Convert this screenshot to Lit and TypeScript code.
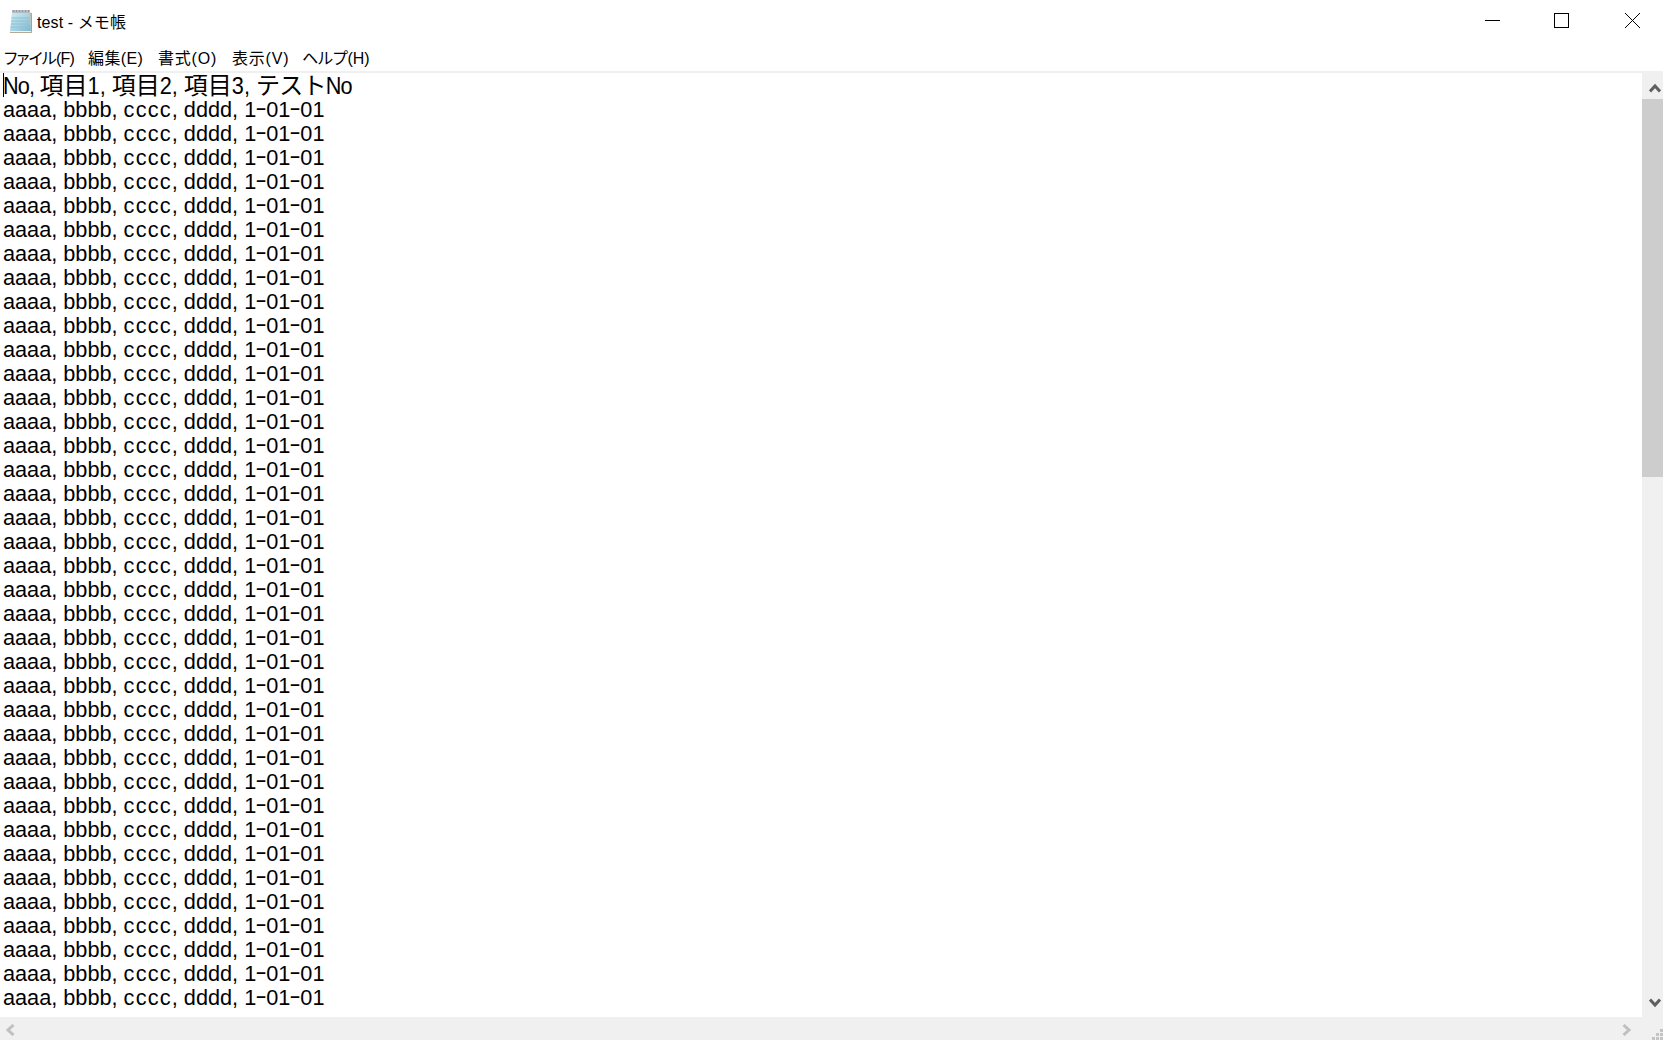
import { LitElement, html, css } from "lit";
import { customElement } from "lit/decorators.js";

const row = html`aaaa, bbbb, <span class="c">cccc</span>, dddd, 1<span class="dash">-</span>01<span class="dash">-</span>01`;

@customElement("app-root")
class AppRoot extends LitElement {
  static styles = css`
    :host { display: block; width: 1663px; height: 1040px; background: #fff; overflow: hidden; color: #000; font-family: "Liberation Sans", "Noto Sans CJK JP", sans-serif; }
    .win { display: flex; flex-direction: column; height: 1040px; }
    .title { height: 42px; display: flex; align-items: center; padding: 0 22px 0 9px; font-size: 16px; letter-spacing: 0.1px; flex: none; }
    .appicon { margin-right: 5px; flex: none; }
    .spacer { flex: 1; }
    .title svg.ctl { flex: none; display: block; }
    .title svg.mx { margin-left: 53px; }
    .title svg.cl { margin-left: 55px; }
    .menu { height: 29px; flex: none; display: flex; padding-left: 4px; font-size: 16px; align-items: center; border-bottom: 2px solid #f0f0f0; font-feature-settings: "palt"; }
    .menu span { flex: none; }
    .m1 { width: 84px; letter-spacing: -0.85px; }
    .m2 { width: 70px; letter-spacing: 0.4px; }
    .m3 { width: 74px; letter-spacing: 0.8px; }
    .m4 { width: 70px; letter-spacing: 0.8px; }
    .m5 { letter-spacing: -0.1px; }
    .mid { flex: 1; display: flex; min-height: 0; }
    .text { flex: 1; overflow: hidden; padding: 1px 0 0 3px; font-size: 21.7px; line-height: 24px; position: relative; }
    .line { display: block; height: 24px; white-space: pre; }
    .tall { display: inline-block; transform: scaleY(1.12); transform-origin: 0 81%; }
    .lead { letter-spacing: -0.8px; }
    .tail { letter-spacing: -1px; }
    .cjk, .kana { display: inline-block; height: 24px; font-size: 24px; }
    .kana { letter-spacing: -0.7px; }
    .c { letter-spacing: 1.2px; }
    .dash { display: inline-block; width: 10px; text-align: center; transform: translateY(-2.5px) scaleX(1.6); }
    .caret { position: absolute; left: 3px; top: 0; width: 1px; height: 24px; background: #000; }
    .vs { width: 21px; background: #f0f0f0; display: flex; flex-direction: column; flex: none; }
    .btn { height: 26px; display: flex; align-items: center; justify-content: center; flex: none; padding-left: 4px; }
    .up { padding-top: 3px; box-sizing: border-box; }
    .down { padding-bottom: 2px; box-sizing: border-box; }
    .thumb { height: 378px; background: #cdcdcd; flex: none; }
    .fill { flex: 1; }
    .hs { height: 23px; box-sizing: border-box; padding-top: 2px; background: #f0f0f0; flex: none; display: flex; align-items: center; position: relative; }
    .hs svg.l { margin-left: 5px; }
    .hs svg.r { margin-right: 31px; }
    .grip { position: absolute; right: 0; bottom: 0; }
  `;
  render() {
    const rows = Array.from({ length: 38 }, () => row);
    return html`<div class="win">
      <div class="title">
        <svg class="appicon" width="23" height="23" viewBox="0 0 23 23">
          <defs><linearGradient id="pg" x1="0" y1="0" x2="1" y2="1"><stop offset="0" stop-color="#d4edf5"/><stop offset="0.55" stop-color="#a5d3e3"/><stop offset="1" stop-color="#7fb6cc"/></linearGradient></defs>
          <path d="M3 2h20v20H1z" fill="#f4f1e8"/>
          <path d="M3 2h18l1 19H1z" fill="url(#pg)"/>
          <path d="M2.500 8h18M2.200 11h18.600M2 14h19M1.700 17h19.500" stroke="#8fc0d2" stroke-width="1" fill="none"/>
          <path d="M3 0h18v3H3z" fill="#b4bcc0"/>
          <path d="M4 1h1M7 1h1M10 1h1M13 1h1M16 1h1M19 1h1" stroke="#6f7a80" stroke-width="1"/>
          <path d="M22 3l1 20" stroke="#a89f8c" stroke-width="1.500"/>
          <path d="M1 22.500h21" stroke="#b5a98f" stroke-width="1"/>
        </svg>
        <span>test - メモ帳</span><span class="spacer"></span>
        <svg class="ctl" width="16" height="16"><path d="M0 7.500h15" stroke="#000"/></svg>
        <svg class="ctl mx" width="16" height="16"><rect x="0.500" y="0.500" width="14" height="14" fill="none" stroke="#000"/></svg>
        <svg class="ctl cl" width="16" height="16"><path d="M0 0l15 15M15 0L0 15" stroke="#000"/></svg>
      </div>
      <div class="menu"><span class="m1">ファイル(F)</span><span class="m2">編集(E)</span><span class="m3">書式(O)</span><span class="m4">表示(V)</span><span class="m5">ヘルプ(H)</span></div>
      <div class="mid">
        <div class="text"><span class="caret"></span><span class="line"><span class="tall lead">No, </span><span class="cjk">項目</span><span class="tall">1, </span><span class="cjk">項目</span><span class="tall">2, </span><span class="cjk">項目</span><span class="tall">3, </span><span class="kana">テスト</span><span class="tall tail">No</span></span>${rows.map((r) => html`<span class="line">${r}</span>`)}</div>
        <div class="vs">
          <div class="btn up"><svg width="12" height="10" viewBox="0 0 12 10"><path d="M1 8.500l5-5.500 5 5.500" fill="none" stroke="#606060" stroke-width="3"/></svg></div>
          <div class="thumb"></div><div class="fill"></div>
          <div class="btn down"><svg width="12" height="10" viewBox="0 0 12 10"><path d="M1 1.500l5 5.500 5-5.500" fill="none" stroke="#606060" stroke-width="3"/></svg></div>
        </div>
      </div>
      <div class="hs">
        <svg class="l" width="10" height="12" viewBox="0 0 10 12"><path d="M8.500 1L3 6l5.500 5" fill="none" stroke="#c0c0c0" stroke-width="3"/></svg>
        <span class="spacer"></span>
        <svg class="r" width="10" height="12" viewBox="0 0 10 12"><path d="M1.500 1L7 6l-5.500 5" fill="none" stroke="#c0c0c0" stroke-width="3"/></svg>
        <svg class="grip" width="11" height="11" viewBox="0 0 11 11" fill="#c4c4c4"><rect x="8" y="0" width="3" height="3"/><rect x="4" y="4" width="3" height="3"/><rect x="8" y="4" width="3" height="3"/><rect x="0" y="8" width="3" height="3"/><rect x="4" y="8" width="3" height="3"/><rect x="8" y="8" width="3" height="3"/></svg>
      </div>
    </div>`;
  }
}
